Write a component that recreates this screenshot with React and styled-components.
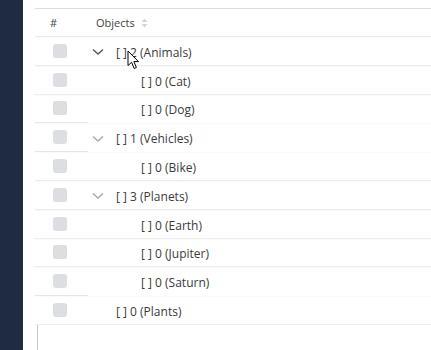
import styled, { createGlobalStyle } from "styled-components";

const GlobalStyle = createGlobalStyle`
  body {
    margin: 0;
    background: #ffffff;
    font-family: "Open Sans", "Noto Sans", sans-serif;
  }
`;

const Page = styled.div`
  display: flex;
  width: 431px;
  height: 350px;
  overflow: hidden;
  position: relative;
`;

const Sidebar = styled.div`
  width: 23px;
  flex-shrink: 0;
  background: #1f2b41;
`;

const Main = styled.div`
  flex: 1;
  padding: 8px 0 0 12px;
  display: flex;
  flex-direction: column;
`;

const Table = styled.div`
  border-top: 1px solid #dedede;
  display: flex;
  flex-direction: column;
`;

const HeaderRow = styled.div`
  display: grid;
  grid-template-columns: 53px 1fr;
  height: 27px;
  align-items: center;
  border-bottom: 1px solid #ececec;
  font-size: 11px;
  color: #444;
`;

const HeaderCell = styled.div`
  display: flex;
  align-items: center;
  gap: 6px;
  padding-left: ${(p) => p.pad}px;
`;

const Row = styled.div`
  display: grid;
  grid-template-columns: 53px 1fr;
  height: 28.8px;
  align-items: center;
  position: relative;
  box-shadow: 0 1px 0 #fafafa inset;
  &::after {
    content: "";
    position: absolute;
    left: 0;
    bottom: 0;
    height: 1px;
    width: ${(p) => (p.partial ? "53px" : "100%")};
    background: ${(p) => (p.partial ? "#e6e6e6" : "#ededed")};
  }
`;

const CheckCell = styled.div`
  display: flex;
  padding-left: 18px;
  padding-bottom: 1px;
`;

const Check = styled.div`
  width: 14px;
  height: 14px;
  border-radius: 3px;
  background: #dcdee1;
`;

const ObjectCell = styled.div`
  display: flex;
  align-items: center;
  padding-left: ${(p) => p.indent}px;
  padding-top: 2px;
  font-size: 12px;
  color: #3a3a3a;
  white-space: nowrap;
`;

const Toggle = styled.span`
  display: inline-flex;
  width: 24px;
  color: ${(p) => (p.active ? "#555" : "#a8a8a8")};
`;

const Footer = styled.div`
  margin-top: auto;
  margin-left: 2px;
  width: 1px;
  height: 26px;
  background: #c8c8c8;
`;

const Cursor = styled.svg`
  position: absolute;
  left: 127px;
  top: 50px;
`;

const Chevron = () => (
  <svg width="12" height="8" viewBox="0 0 12 8">
    <path d="M1 1.5 L6 6 L11 1.5" fill="none" stroke="currentColor" strokeWidth="1.4" />
  </svg>
);

const SortIcon = () => (
  <svg width="7" height="10" viewBox="0 0 7 10">
    <path d="M3.5 0.5 L6.5 4 L0.5 4 Z" fill="#d4d4d4" />
    <path d="M3.5 9.5 L6.5 6 L0.5 6 Z" fill="#d4d4d4" />
  </svg>
);

const rows = [
  { label: "[ ] 2 (Animals)", level: 0, toggle: true, active: true },
  { label: "[ ] 0 (Cat)", level: 1 },
  { label: "[ ] 0 (Dog)", level: 1, partial: true },
  { label: "[ ] 1 (Vehicles)", level: 0, toggle: true, partial: true },
  { label: "[ ] 0 (Bike)", level: 1 },
  { label: "[ ] 3 (Planets)", level: 0, toggle: true },
  { label: "[ ] 0 (Earth)", level: 1 },
  { label: "[ ] 0 (Jupiter)", level: 1 },
  { label: "[ ] 0 (Saturn)", level: 1, partial: true },
  { label: "[ ] 0 (Plants)", level: 0 },
];

export default function App() {
  return (
    <Page>
      <GlobalStyle />
      <Sidebar />
      <Main>
        <Table>
          <HeaderRow>
            <HeaderCell pad={15}>#</HeaderCell>
            <HeaderCell pad={8}>
              Objects <SortIcon />
            </HeaderCell>
          </HeaderRow>
          {rows.map((r, i) => (
            <Row key={i} partial={r.partial}>
              <CheckCell>
                <Check />
              </CheckCell>
              <ObjectCell indent={r.level === 1 ? 53 : r.toggle ? 4 : 28}>
                {r.toggle && (
                  <Toggle active={r.active}>
                    <Chevron />
                  </Toggle>
                )}
                {r.label}
              </ObjectCell>
            </Row>
          ))}
        </Table>
        <Footer />
      </Main>
      <Cursor width="13" height="20" viewBox="0 0 13 20">
        <path
          d="M1 1 L1 15.5 L4.6 12.3 L7.2 18.5 L9.4 17.5 L6.9 11.6 L11.5 11.6 Z"
          fill="#fff"
          stroke="#000"
          strokeWidth="1"
          strokeLinejoin="round"
        />
      </Cursor>
    </Page>
  );
}
